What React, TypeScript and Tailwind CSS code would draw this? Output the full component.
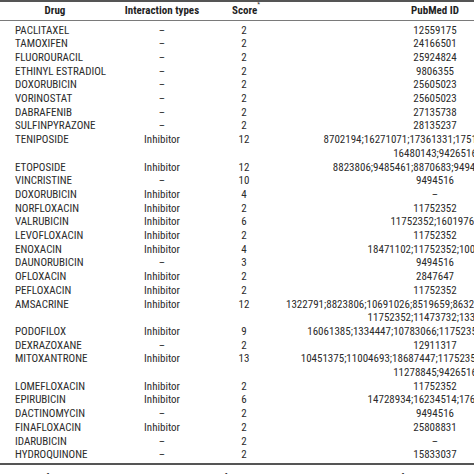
import React from 'react';

type Row = {
  drug: string;
  type: string;
  score: string;
  ids: string[];
};

const rows: Row[] = [
  { drug: 'PACLITAXEL', type: '–', score: '2', ids: ['12559175'] },
  { drug: 'TAMOXIFEN', type: '–', score: '2', ids: ['24166501'] },
  { drug: 'FLUOROURACIL', type: '–', score: '2', ids: ['25924824'] },
  { drug: 'ETHINYL ESTRADIOL', type: '–', score: '2', ids: ['9806355'] },
  { drug: 'DOXORUBICIN', type: '–', score: '2', ids: ['25605023'] },
  { drug: 'VORINOSTAT', type: '–', score: '2', ids: ['25605023'] },
  { drug: 'DABRAFENIB', type: '–', score: '2', ids: ['27135738'] },
  { drug: 'SULFINPYRAZONE', type: '–', score: '2', ids: ['28135237'] },
  {
    drug: 'TENIPOSIDE',
    type: 'Inhibitor',
    score: '12',
    ids: ['8702194;16271071;17361331;17516867;11752352;', '16480143;9426516'],
  },
  { drug: 'ETOPOSIDE', type: 'Inhibitor', score: '12', ids: ['8823806;9485461;8870683;9494516;16480143'] },
  { drug: 'VINCRISTINE', type: '–', score: '10', ids: ['9494516'] },
  { drug: 'DOXORUBICIN', type: 'Inhibitor', score: '4', ids: ['–'] },
  { drug: 'NORFLOXACIN', type: 'Inhibitor', score: '2', ids: ['11752352'] },
  { drug: 'VALRUBICIN', type: 'Inhibitor', score: '6', ids: ['11752352;16019760'] },
  { drug: 'LEVOFLOXACIN', type: 'Inhibitor', score: '2', ids: ['11752352'] },
  { drug: 'ENOXACIN', type: 'Inhibitor', score: '4', ids: ['18471102;11752352;10030398'] },
  { drug: 'DAUNORUBICIN', type: '–', score: '3', ids: ['9494516'] },
  { drug: 'OFLOXACIN', type: 'Inhibitor', score: '2', ids: ['2847647'] },
  { drug: 'PEFLOXACIN', type: 'Inhibitor', score: '2', ids: ['11752352'] },
  {
    drug: 'AMSACRINE',
    type: 'Inhibitor',
    score: '12',
    ids: ['1322791;8823806;10691026;8519659;8632185;16061385;11004693;', '11752352;11473732;13361331'],
  },
  { drug: 'PODOFILOX', type: 'Inhibitor', score: '9', ids: ['16061385;1334447;10783066;11752352;9426516;8823806'] },
  { drug: 'DEXRAZOXANE', type: '–', score: '2', ids: ['12911317'] },
  {
    drug: 'MITOXANTRONE',
    type: 'Inhibitor',
    score: '13',
    ids: ['10451375;11004693;18687447;11752352;16234514;9426516;', '11278845;9426516'],
  },
  { drug: 'LOMEFLOXACIN', type: 'Inhibitor', score: '2', ids: ['11752352'] },
  { drug: 'EPIRUBICIN', type: 'Inhibitor', score: '6', ids: ['14728934;16234514;17607729'] },
  { drug: 'DACTINOMYCIN', type: '–', score: '2', ids: ['9494516'] },
  { drug: 'FINAFLOXACIN', type: 'Inhibitor', score: '2', ids: ['25808831'] },
  { drug: 'IDARUBICIN', type: '–', score: '2', ids: ['–'] },
  { drug: 'HYDROQUINONE', type: '–', score: '2', ids: ['15833037'] },
];

const cols = 'grid grid-cols-[110px_104px_60px_322px]';

export default function App() {
  return (
    <div
      className="w-[474px] h-[474px] overflow-hidden bg-white text-[#2b2b2b]"
      style={{ fontFamily: '"Roboto Condensed", "Open Sans", sans-serif' }}
    >
      <div className="w-[596px]">
        <div className={`${cols} h-[21px] border-t-2 border-b border-t-[#555] border-b-[#7a7a7a] items-center text-[11px] font-bold text-[#1f1f1f]`}>
          <div className="text-center">Drug</div>
          <div className="text-center">Interaction types</div>
          <div className="text-center pl-[4px]">
            Score<sup className="text-[6px] align-super">*</sup>
          </div>
          <div className="text-center">PubMed ID</div>
        </div>

        <div className="pt-[2.5px] text-[11px] leading-[13.7px]">
          {rows.map((r, i) => (
            <div key={i} className={cols}>
              <div className="pl-[15px] whitespace-nowrap">{r.drug}</div>
              <div className="text-center">{r.type}</div>
              <div className="text-center">{r.score}</div>
              <div className="text-center whitespace-nowrap">
                {r.ids.map((line, j) => (
                  <div key={j}>{line}</div>
                ))}
              </div>
            </div>
          ))}
        </div>

        <div className="border-t-2 border-[#555] mt-[1px] pt-[7px] pl-[8px] text-[11px] leading-[13px] whitespace-nowrap">
          *Score of drug–gene interaction and PubMed ID of the supporting literature were retrieved from DGIdb.
        </div>
      </div>
    </div>
  );
}
